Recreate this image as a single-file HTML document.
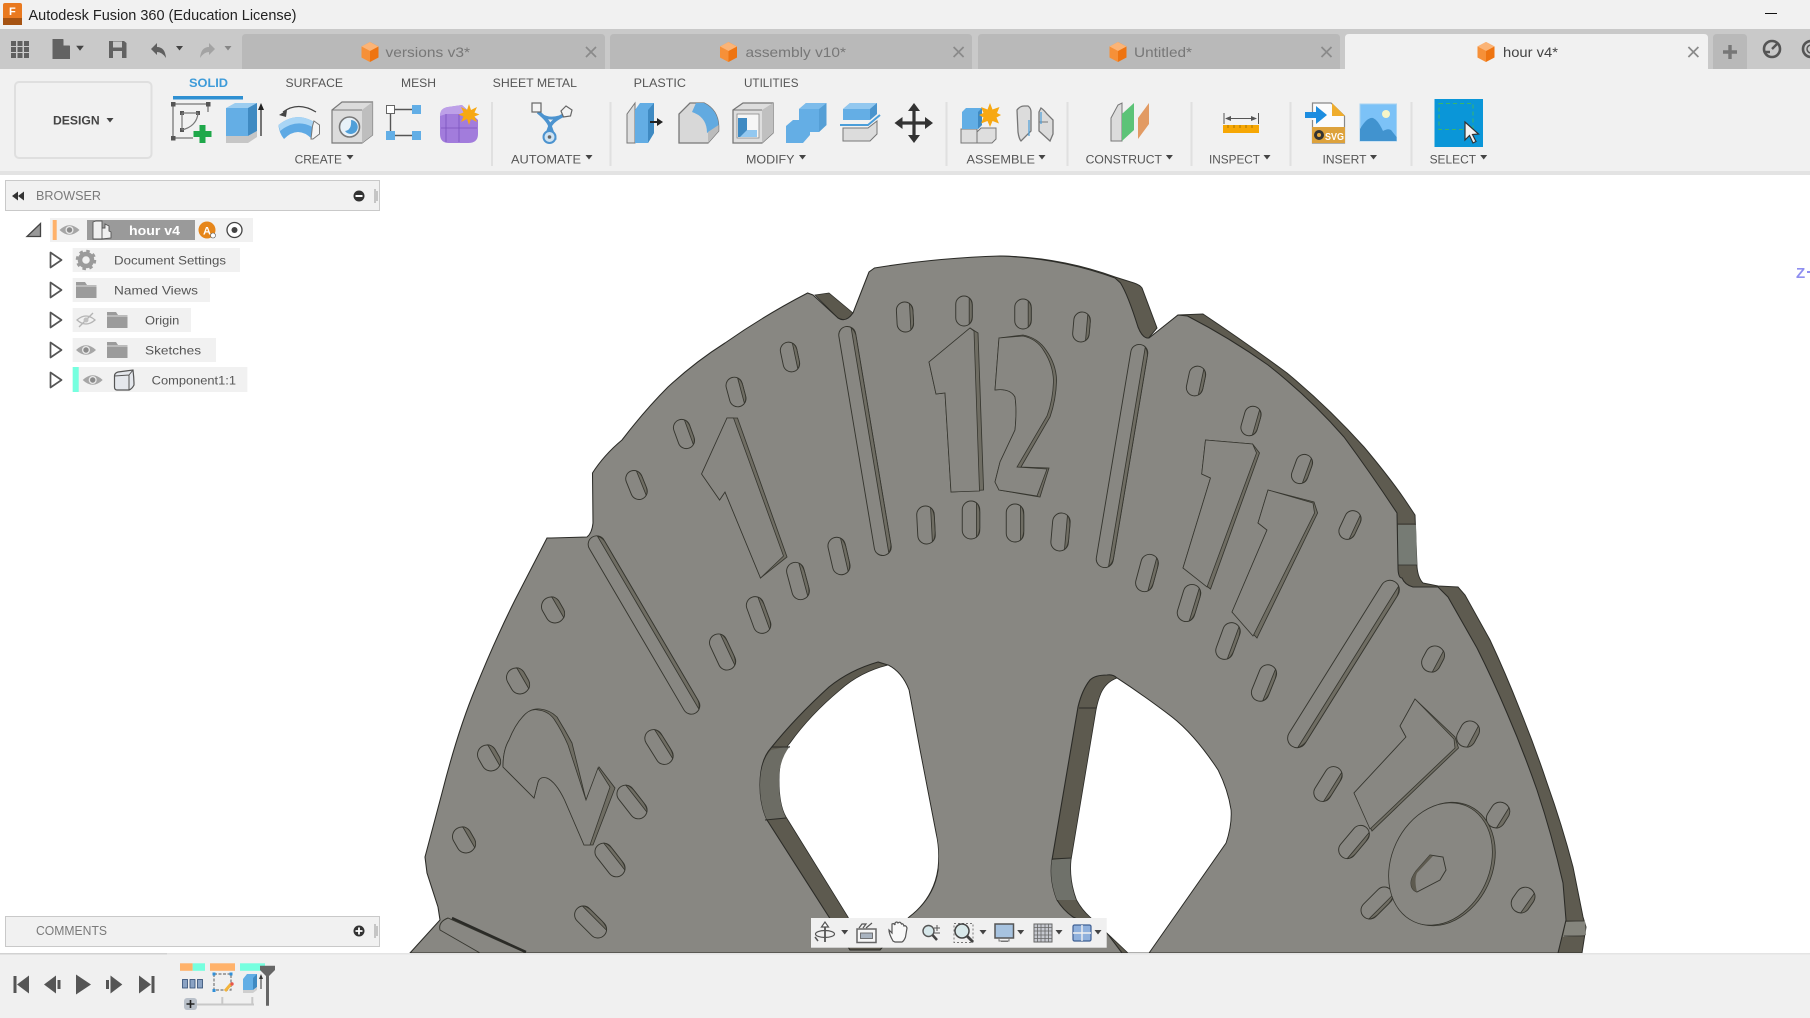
<!DOCTYPE html>
<html><head><meta charset="utf-8"><title>Autodesk Fusion 360</title>
<style>
html,body{margin:0;padding:0;background:#fff;width:1810px;height:1018px;overflow:hidden}
svg{position:absolute;left:0;top:0;display:block;font-family:"Liberation Sans",sans-serif;filter:blur(.35px)}
.lb{font-size:12px;fill:#555}
.tb{font-size:14px;fill:#777}
.tr{font-size:12px;fill:#555}
.ol{stroke:#36362f;stroke-width:.95;fill:#888782}
.wl{fill:#6f6d63;stroke:#36362f;stroke-width:.85}
</style></head><body>
<svg width="1810" height="1018" viewBox="0 0 1810 1018" xmlns="http://www.w3.org/2000/svg">
<defs>
<g id="a"><rect class="ol" x="-8.250" y="-15" width="16.500" height="30" rx="8.250"/><path class="wl" d="M5.200 -13V13Q7.800 11 8.250 6V-6Q7.800 -11 5.200 -13Z"/></g>
<g id="b"><rect class="ol" x="-8.750" y="-19" width="17.500" height="38" rx="8.750"/><path class="wl" d="M5.500 -17V17Q8.200 15 8.750 8V-8Q8.200 -15 5.500 -17Z"/></g>
<g id="c"><rect class="ol" x="-9.500" y="-13.500" width="19" height="27" rx="9.500"/><path class="wl" d="M5.500 -12V12Q8.800 10 9.500 5V-5Q8.800 -10 5.500 -12Z"/></g>
<g id="cube"><path d="M0 -10L8.500 -5.500V5.500L0 10Z" fill="#ee7411"/><path d="M0 -10L-8.500 -5.500V5.500L0 10Z" fill="#f7923c"/><path d="M0 -10L8.500 -5.500L0 -1L-8.500 -5.500Z" fill="#fbb477"/><path d="M0 -1V10L-8.500 5.500V-5.500Z" fill="#f58f35" opacity=".6"/></g>
<path id="car" d="M-3.500 -2H3.500L0 2.500Z" fill="#444"/>
<g id="x"><path d="M-5 -5L5 5M5 -5L-5 5" stroke="#8a8a8a" stroke-width="1.700" fill="none"/></g>
<g id="eye"><path d="M-10 0Q0 -9.500 10 0Q0 9.500 -10 0Z" fill="#a6a6a6"/><circle r="4" fill="#e8e8e8"/><circle r="2.700" fill="#8b8b8b"/></g>
<g id="fold"><path d="M0 0H9L11 3H20.500V16H0Z" fill="#9b9b9b"/><path d="M0 4H20.500" stroke="#f0f0f0" stroke-width=".8"/></g>
<path id="exp" d="M0 -7.500L11 0L0 7.500Z" fill="#fff" stroke="#555" stroke-width="1.700" stroke-linejoin="round"/>
</defs>

<!-- MODEL -->
<path d="M829 293L815 295L838 318L846 321L853 313Z" fill="#5b584d" stroke="#2f2f2a" stroke-width=".8"/>
<path d="M1000 256Q1060 257 1115 277L1134 283Q1140 285 1142 288L1157 328L1147 340L1178 315L1203 314Q1245 342 1287 373Q1328 407 1364 447Q1390 478 1405 500L1415 515L1417 567Q1418 578 1423 583L1438 586L1458 587L1465 595L1490 640Q1505 672 1520 710Q1535 747 1547 783Q1562 825 1573 867L1583 917L1586 927L1582 953H1000Z" fill="#5e5b50" stroke="#2f2f2a" stroke-width="1"/>
<path d="M1398 525L1416 525L1417 565L1398 565Z" fill="#767b74"/>
<path d="M1566 922L1585 921L1586 935L1563 937Z" fill="#85857d"/>
<path d="M1397 524H1415M1398 565H1417M1566 921H1584M1564 936H1585" stroke="#2f2f2a" stroke-width=".8"/>
<path d="M410 953L440 920L438 907L427 873L425 857L442 793Q458 730 476 687Q495 640 515 600L547 538L551 538L587 537Q592 533 593 523L592.500 473Q604 455 622 440Q645 410 668 387Q695 362 725 343Q765 315 807.600 293L813 295L838 318Q846 323 853 313L869 272L874.500 268Q935 258 1000 256Q1060 258 1115 278L1120.500 283Q1128 295 1138 327Q1142 337 1147 338L1149 338L1178 315L1187.500 316Q1230 338 1268 365Q1310 398 1344 437Q1372 475 1397 513L1398 567Q1398 578 1402 578Q1405 585 1413 587L1438 587L1448 597L1477 648Q1493 680 1507 713Q1523 750 1537 790Q1552 835 1563 883L1566 920L1558 953Z" fill="#888782" stroke="#2b2b27" stroke-width="1.050"/>

<!-- holes -->
<path d="M888 665L878 662Q850 670 829 687Q795 718 771 748Q760 760 760 785Q760 805 767 820L829 917L850 950L880 950L909 917Q934 898 938 870Q939 850 936 833L920 750L909 690Q902 672 888 665Z" fill="#5d5a4f" stroke="#2b2b27" stroke-width="1.100"/>
<path d="M888 665Q860 672 840 690Q810 715 790 743Q779 755 779 780Q779 805 786 817L848 917L860 945L880 945L909 917Q934 898 938 868Q940 850 936 833L920 750L909 690Q902 672 888 665Z" fill="#fff" stroke="#2b2b27" stroke-width=".8"/>
<path d="M771 750Q760 762 760 785Q760 805 767 820L786 818Q779 805 779 780Q779 760 790 746Z" fill="#6c6c64"/>
<path d="M772 747L790 747M765 820L786 818" stroke="#2b2b27" stroke-width=".9"/>
<path d="M1117 678Q1113 674 1107 675Q1095 675 1090 680Q1082 690 1078 707L1052 860Q1049 880 1057 900Q1063 910 1073 917L1107 933L1122 953L1149 953L1226 843Q1232 825 1231 810Q1228 790 1218 770Q1195 735 1172 717Q1143 695 1117 678Z" fill="#5d5a4f" stroke="#2b2b27" stroke-width="1.100"/>
<path d="M1052 860L1071 858Q1069 880 1076 900L1057 900Q1049 880 1052 860Z" fill="#6f716a"/>
<path d="M1117 678Q1106 682 1101 693Q1098 700 1096 710L1071 860Q1069 880 1076.500 900Q1082 910 1090 917L1128 953L1149 953L1226 843Q1232 825 1231 810Q1228 790 1218 770Q1195 735 1172 717Q1143 695 1117 678Z" fill="#fff" stroke="#2b2b27" stroke-width=".8"/>
<path d="M1079 708L1096 708M1052 859L1071 858" stroke="#2b2b27" stroke-width=".9"/>

<!-- long slots -->
<g transform="translate(865 441) rotate(-9.500)"><rect class="ol" x="-8.500" y="-116" width="17" height="232" rx="8.500"/><path class="wl" d="M5 -114V114Q8 111 8.500 106V-106Q8 -111 5 -114Z"/></g>
<g transform="translate(1122 456) rotate(9.500)"><rect class="ol" x="-8.500" y="-113" width="17" height="226" rx="8.500"/><path class="wl" d="M5 -111V111Q8 108 8.500 103V-103Q8 -108 5 -111Z"/></g>
<g transform="translate(644 625) rotate(-30.400)"><rect class="ol" x="-8.500" y="-102" width="17" height="204" rx="8.500"/><path class="wl" d="M4.800 -100V100Q8 97 8.500 92V-92Q8 -97 4.800 -100Z"/></g>
<g transform="translate(1343.500 664) rotate(32)"><rect class="ol" x="-9.500" y="-97" width="19" height="194" rx="9.500"/><path class="wl" d="M5.500 -95V95Q8.500 92 9.500 86V-86Q8.500 -92 5.500 -95Z"/></g>
<path d="M480 953L440 930Q438 922 448 918L526 953Z" class="ol"/>
<path d="M452 918L526 952" stroke="#2b2b27" stroke-width="2.400" fill="none"/>

<!-- small slots -->
<use href="#a" transform="translate(905 317) rotate(-3)"/>
<use href="#a" transform="translate(964 311)"/>
<use href="#a" transform="translate(1023 314)"/>
<use href="#a" transform="translate(1081.500 327) rotate(5)"/>
<use href="#a" transform="translate(790 357) rotate(-12)"/>
<use href="#a" transform="translate(736 392) rotate(-15)"/>
<use href="#a" transform="translate(684 434) rotate(-20)"/>
<use href="#a" transform="translate(636.500 485) rotate(-22)"/>
<use href="#c" transform="translate(553 610) rotate(-30)"/>
<use href="#c" transform="translate(518 681) rotate(-30)"/>
<use href="#c" transform="translate(489 758) rotate(-30)"/>
<use href="#c" transform="translate(464 840) rotate(-30)"/>
<use href="#a" transform="translate(1196 381) rotate(12)"/>
<use href="#a" transform="translate(1251 421) rotate(16)"/>
<use href="#a" transform="translate(1302 469) rotate(20)"/>
<use href="#a" transform="translate(1350 525) rotate(25)"/>
<use href="#c" transform="translate(1433 659) rotate(28)"/>
<use href="#c" transform="translate(1468 734) rotate(28)"/>
<use href="#c" transform="translate(1498 815) rotate(32)"/>
<use href="#c" transform="translate(1523 900) rotate(35)"/>
<use href="#b" transform="translate(926 525) rotate(-3)"/>
<use href="#b" transform="translate(971 520)"/>
<use href="#b" transform="translate(1015 523)"/>
<use href="#b" transform="translate(1060.500 532) rotate(5)"/>
<use href="#b" transform="translate(1147 573) rotate(15)"/>
<use href="#b" transform="translate(1189 603) rotate(17)"/>
<use href="#b" transform="translate(1228 641) rotate(20)"/>
<use href="#b" transform="translate(1264 683) rotate(22)"/>
<use href="#b" transform="translate(1328 784) rotate(32)"/>
<use href="#b" transform="translate(1354 842) rotate(40)"/>
<use href="#b" transform="translate(1377 903) rotate(45)"/>
<use href="#b" transform="translate(839 556) rotate(-13)"/>
<use href="#b" transform="translate(798 581) rotate(-15)"/>
<use href="#b" transform="translate(758.600 615) rotate(-20)"/>
<use href="#b" transform="translate(722.600 652) rotate(-25)"/>
<use href="#b" transform="translate(659 747) rotate(-32)"/>
<use href="#b" transform="translate(632 802) rotate(-38)"/>
<use href="#b" transform="translate(610 860) rotate(-38)"/>
<use href="#b" transform="translate(590.600 922) rotate(-45)"/>

<!-- digits -->
<path class="wl" d="M727 418L737.500 418L787 557L760.500 578L725 492L719.600 500L701.600 474Z"/>
<path d="M727 418L733.500 418L783.500 556L760.500 578L725 492L719.600 500L701.600 474Z" fill="#888782" stroke="#36362f" stroke-width=".8"/>
<path class="wl" d="M970 328L978 333L983.600 490L951 492L945 393L936 394L929 362Z"/>
<path d="M970 328L974 331L979.500 491L951 492L945 393L936 394L929 362Z" fill="#888782" stroke="#36362f" stroke-width=".8"/>
<path class="wl" d="M999 338L1023 335Q1038 338 1046 350Q1056 364 1056.600 380Q1056 400 1050 417L1021 467L1049 468L1040 497L999 490L995 482L1000 462L1015 430Q1017 410 1015 397Q1010 388 995 390Z"/>
<path d="M999 338L1023 336Q1037 339 1044 351Q1053 365 1053.500 381Q1053 400 1047 416L1017 467L1047 469L1037 496L999 490L995 482L1000 462L1015 430Q1017 410 1015 397Q1010 388 995 390Z" fill="#888782" stroke="#36362f" stroke-width=".8"/>
<path class="wl" d="M1205.500 440L1252.600 444L1259.500 453L1210.500 589L1183 568L1210.500 478L1201.700 474Z"/>
<path d="M1205.500 440L1252.600 444L1256.500 453L1207 587L1183 568L1210.500 478L1201.700 474Z" fill="#888782" stroke="#36362f" stroke-width=".8"/>
<path class="wl" d="M1268 490L1314 502L1317.600 513L1257 638L1232 612L1267 530L1258 523Z"/>
<path d="M1268 490L1313 503L1314.500 513L1253 636L1232 612L1267 530L1258 523Z" fill="#888782" stroke="#36362f" stroke-width=".8"/>
<path class="wl" d="M1415 699L1455 737L1458.500 748L1372 831L1354 793L1406 737L1400 726Z"/>
<path d="M1415 699L1454 739L1455 748L1370 829L1354 793L1406 737L1400 726Z" fill="#888782" stroke="#36362f" stroke-width=".8"/>
<path class="wl" d="M503 767Q503 750 509 740Q515 725 522.500 717Q530 708 540 709Q550 710 557 717Q565 730 572 743L586 800L599 767L615 788L593 845L584 845L564.600 800Q556 782 547 778Q540 776 538 782L534 798Z"/>
<path d="M503 767Q503 750 509 740Q515 725 522.500 717Q530 708 538 710Q548 711 554 719Q562 731 568 745L586 800L598 768L610 787L590 845L584 845L564.600 800Q556 782 547 778Q540 776 538 782L534 798Z" fill="#888782" stroke="#36362f" stroke-width=".8"/>
<ellipse cx="1442.500" cy="864" rx="50" ry="64" transform="rotate(25 1442.500 864)" class="wl"/>
<ellipse cx="1440.500" cy="864" rx="49" ry="63.500" transform="rotate(25 1440.500 864)" fill="#888782" stroke="#36362f" stroke-width=".8"/>
<path d="M1411 883Q1411 878 1416 871L1430 855L1443 857L1446 870L1440 880L1417 892Q1411 890 1411 883Z" class="ol"/>
<path d="M1411 883Q1411 878 1416 871L1430 855L1433 856L1417 873Q1414 880 1417 892Q1411 890 1411 883Z" fill="#5d5a4f"/>

<!-- Z axis -->
<text x="1796" y="278" font-size="15" font-weight="bold" fill="#8f8ff0">Z</text>
<path d="M1807 272H1810" stroke="#8f8ff0" stroke-width="2"/>

<!-- TITLE BAR -->
<rect width="1810" height="29" fill="#f1f1f1"/>
<path d="M3 5Q3 3 5 3H20Q22 3 22 5V25H3Z" fill="#e9791f"/>
<rect x="3" y="18" width="19" height="7" fill="#a65312"/>
<text x="9" y="15" font-size="11" font-weight="bold" fill="#fff">F</text>
<text x="28.500" y="20" font-size="14.500" fill="#222" textLength="268" lengthAdjust="spacingAndGlyphs">Autodesk Fusion 360 (Education License)</text>
<rect x="1765" y="13" width="12" height="1" fill="#111"/>

<!-- TAB STRIP -->
<rect y="29" width="1810" height="40" fill="#c9c9c9"/>
<path d="M242 69V38Q242 34 246 34H601Q605 34 605 38V69Z" fill="#b9b9b9"/>
<path d="M610 69V38Q610 34 614 34H968Q972 34 972 38V69Z" fill="#b9b9b9"/>
<path d="M978 69V38Q978 34 982 34H1336Q1340 34 1340 38V69Z" fill="#b9b9b9"/>
<path d="M1345 69V38Q1345 34 1349 34H1704Q1708 34 1708 38V69Z" fill="#f1f1f1"/>
<path d="M1713 69V38Q1713 34 1717 34H1743Q1747 34 1747 38V69Z" fill="#b9b9b9"/>
<use href="#cube" transform="translate(370 52)"/><use href="#cube" transform="translate(728.500 52)"/><use href="#cube" transform="translate(1118 52)"/><use href="#cube" transform="translate(1486 52)"/>
<text class="tb" x="385.500" y="57" textLength="84.500" lengthAdjust="spacingAndGlyphs">versions v3*</text>
<text class="tb" x="745.500" y="57" textLength="100.500" lengthAdjust="spacingAndGlyphs">assembly v10*</text>
<text class="tb" x="1134" y="57" textLength="58" lengthAdjust="spacingAndGlyphs">Untitled*</text>
<text class="tb" x="1503" y="57" textLength="55" lengthAdjust="spacingAndGlyphs" style="fill:#444">hour v4*</text>
<use href="#x" transform="translate(591 52)"/><use href="#x" transform="translate(958.600 52)"/><use href="#x" transform="translate(1326.500 52)"/><use href="#x" transform="translate(1693.400 52)"/>
<path d="M1730 45V59M1723 52H1737" stroke="#777" stroke-width="3.400"/>
<circle cx="1772" cy="49" r="8" fill="none" stroke="#555" stroke-width="2.600"/><path d="M1772 49L1778 43M1764 52H1770" stroke="#555" stroke-width="2.400"/>
<circle cx="1811" cy="49" r="8" fill="none" stroke="#555" stroke-width="2.600"/><circle cx="1811" cy="49" r="4" fill="none" stroke="#555" stroke-width="1.500"/>
<!-- left tab bar icons -->
<g fill="#5f5f5f"><rect x="11" y="41" width="5" height="5"/><rect x="17.500" y="41" width="5" height="5"/><rect x="24" y="41" width="5" height="5"/><rect x="11" y="47" width="5" height="5"/><rect x="17.500" y="47" width="5" height="5"/><rect x="24" y="47" width="5" height="5"/><rect x="11" y="53" width="5" height="5"/><rect x="17.500" y="53" width="5" height="5"/><rect x="24" y="53" width="5" height="5"/></g>
<path d="M52.500 39H63L70 46V59H52.500Z" fill="#626262"/><path d="M63.500 39V45.500H70Z" fill="#c9c9c9"/>
<use href="#car" transform="translate(80 48) scale(1.100)"/>
<path d="M109 41H124L126.500 43V58H109Z" fill="#626262"/><rect x="113" y="41.500" width="9" height="6" fill="#c9c9c9"/><rect x="113" y="51" width="9" height="7" fill="#c9c9c9"/>
<path d="M151 49L157 43V47Q165 47 166 58Q162 52 157 52V55Z" fill="#5f5f5f"/>
<use href="#car" transform="translate(179.500 48)"/>
<path d="M215 49L209 43V47Q201 47 200 58Q204 52 209 52V55Z" fill="#a3a3a3"/>
<use href="#car" transform="translate(228 48)" style="opacity:.5"/>

<!-- TOOLBAR -->
<rect y="69" width="1810" height="102" fill="#f1f1f1"/>
<rect y="171" width="1810" height="4" fill="#e3e3e3"/>
<rect x="15" y="82" width="136.500" height="76" rx="4" fill="#f1f1f1" stroke="#dfdfdf" stroke-width="2"/>
<text x="53" y="124.500" font-size="12" font-weight="bold" fill="#444" textLength="46.600" lengthAdjust="spacingAndGlyphs">DESIGN</text>
<use href="#car" transform="translate(110 120)"/>
<text x="189" y="87" font-size="12" font-weight="bold" fill="#3d9bd9" textLength="39" lengthAdjust="spacingAndGlyphs">SOLID</text>
<rect x="173" y="96" width="70" height="3.500" fill="#2f90d2"/>
<text class="lb" x="285.500" y="87" textLength="57.500" lengthAdjust="spacingAndGlyphs">SURFACE</text>
<text class="lb" x="401" y="87" textLength="35" lengthAdjust="spacingAndGlyphs">MESH</text>
<text class="lb" x="492.700" y="87" textLength="84.300" lengthAdjust="spacingAndGlyphs">SHEET METAL</text>
<text class="lb" x="633.600" y="87" textLength="52.400" lengthAdjust="spacingAndGlyphs">PLASTIC</text>
<text class="lb" x="744" y="87" textLength="54.500" lengthAdjust="spacingAndGlyphs">UTILITIES</text>
<text class="lb" x="294.600" y="163.500" textLength="47.400" lengthAdjust="spacingAndGlyphs">CREATE</text><use href="#car" transform="translate(350 157)"/>
<text class="lb" x="511" y="163.500" textLength="70" lengthAdjust="spacingAndGlyphs">AUTOMATE</text><use href="#car" transform="translate(589 157)"/>
<text class="lb" x="746" y="163.500" textLength="48.500" lengthAdjust="spacingAndGlyphs">MODIFY</text><use href="#car" transform="translate(802.500 157)"/>
<text class="lb" x="966.500" y="163.500" textLength="68.500" lengthAdjust="spacingAndGlyphs">ASSEMBLE</text><use href="#car" transform="translate(1042 157)"/>
<text class="lb" x="1085.600" y="163.500" textLength="76.400" lengthAdjust="spacingAndGlyphs">CONSTRUCT</text><use href="#car" transform="translate(1169.400 157)"/>
<text class="lb" x="1209" y="163.500" textLength="51" lengthAdjust="spacingAndGlyphs">INSPECT</text><use href="#car" transform="translate(1267 157)"/>
<text class="lb" x="1322.500" y="163.500" textLength="44" lengthAdjust="spacingAndGlyphs">INSERT</text><use href="#car" transform="translate(1373.500 157)"/>
<text class="lb" x="1429.600" y="163.500" textLength="46.400" lengthAdjust="spacingAndGlyphs">SELECT</text><use href="#car" transform="translate(1483.700 157)"/>
<g fill="#e0e0e0"><rect x="491" y="102" width="2" height="64"/><rect x="609.500" y="102" width="2" height="64"/><rect x="945.500" y="102" width="2" height="64"/><rect x="1066.500" y="102" width="2" height="64"/><rect x="1190.500" y="102" width="2" height="64"/><rect x="1289.500" y="102" width="2" height="64"/><rect x="1410.500" y="102" width="2" height="64"/></g>

<!-- sketch -->
<path d="M173 104H208V112M173 104V138H193" fill="none" stroke="#777" stroke-width="1.300"/>
<g fill="#555"><rect x="171" y="102" width="4.500" height="4.500"/><rect x="206" y="102" width="4.500" height="4.500"/><rect x="171" y="136" width="4.500" height="4.500"/><rect x="180" y="111" width="4" height="4"/><rect x="196" y="111" width="4" height="4"/><rect x="180" y="128" width="4" height="4"/></g>
<path d="M182 113V130M182 113H198M198 113Q197 126 182 130" fill="none" stroke="#777" stroke-width="1.200"/>
<path d="M199.500 125H205.500V131H211.500V137H205.500V143H199.500V137H193.500V131H199.500Z" fill="#1fa84a"/>
<!-- extrude -->
<path d="M226 108L235 103H257V132L248 136V108Z" fill="#9ccdf0"/>
<rect x="226" y="108" width="22" height="28" fill="#64aee5"/>
<path d="M248 108L257 103V131L248 136Z" fill="#3f8ac2"/>
<path d="M226 136H248L257 131V137L248 143H226Z" fill="#c6c6c6"/>
<path d="M261 136V108" stroke="#222" stroke-width="1.200"/><path d="M261 103L258 110H264Z" fill="#222"/>
<!-- revolve -->
<path d="M283 112Q298 101 316 112" fill="none" stroke="#444" stroke-width="1.200"/><path d="M279 115L287 110L286 117Z" fill="#444"/>
<path d="M278.500 125Q296 111 314 122L312 139Q298 125 284 139Q279 133 278.500 125Z" fill="#5ea9e4"/>
<path d="M278.500 125Q296 111 314 122L312.500 127Q296 118 280 131Z" fill="#a9d5f5"/>
<path d="M314 121L319.500 125V134L313 139L311 139L312.500 126Z" fill="#f4f4f4" stroke="#777" stroke-width="1"/>
<!-- hole -->
<path d="M332 110L342 102H372.500V135L362 143H332Z" fill="#dcdcdc" stroke="#7a7a7a" stroke-width="1.200"/>
<path d="M362 110L372.500 102V135L362 143Z" fill="#bebebe"/><path d="M332 110H362" stroke="#7a7a7a"/>
<circle cx="349.500" cy="127" r="10" fill="#e8f1f8" stroke="#777" stroke-width="1.600"/><path d="M351 120A7 7 0 1 1 345 131Q352 130 351 120Z" fill="#4f9fd9"/>
<!-- rect pattern -->
<path d="M395 109.500H412M390.500 114V131M395 135.500H412" stroke="#555" stroke-width="1.400"/>
<rect x="386.500" y="105.500" width="8" height="8" fill="#fff" stroke="#666"/>
<rect x="412" y="105" width="9" height="9" fill="#62aee6"/><rect x="386" y="131" width="9" height="9" fill="#62aee6"/><rect x="412" y="131" width="9" height="9" fill="#62aee6"/>
<!-- purple -->
<path d="M440 116Q440 108 448 107L462 105L478 120V134Q478 143 468 143H449Q440 143 440 134Z" fill="#a27cdc"/>
<path d="M440 116Q440 108 448 107L462 105L470 114H446Z" fill="#bda0e8"/>
<path d="M446 114V142M441 128H477M459 114V142" stroke="#7c53bd" stroke-width=".8"/>
<path d="M469 104L471 110L477 107L474.500 112.500L479.500 114.500L474.500 116.500L477 122L471 119L469 125L467 119L461 122L463.500 116.500L458.500 114.500L463.500 112.500L461 107L467 110Z" fill="#f7a812"/>
<!-- automate -->
<path d="M538 112Q548 120 550 126Q553 120 564 115M550 126L545 140M550 126L555 140" fill="none" stroke="#4c93cf" stroke-width="3.600"/>
<path d="M541 115Q549 120 559 117" fill="none" stroke="#4c93cf" stroke-width="3"/>
<rect x="532" y="103" width="9" height="9" fill="#f4f4f4" stroke="#666" stroke-width="1.200"/>
<path d="M566 106L572 110L570.500 116L563.500 117L561 111Z" fill="#f4f4f4" stroke="#666" stroke-width="1.200"/>
<circle cx="549.500" cy="137" r="6" fill="#cfe3f2" stroke="#4c93cf" stroke-width="2"/><circle cx="549.500" cy="137" r="1.800" fill="#666"/>
<!-- press pull -->
<path d="M627 143V114L635 103V143Z" fill="#dedede" stroke="#777"/>
<path d="M635 110L640 103H654V133L648 143H635Z" fill="#63ade4"/>
<path d="M648 110L654 103V133L648 143Z" fill="#3f8ac2"/>
<path d="M650 122H658" stroke="#222" stroke-width="2"/><path d="M657 118L663 122L657 126Z" fill="#222"/>
<!-- fillet -->
<path d="M679 143V114L690 103H704Q718 110 718.600 126V131L708 143Z" fill="#d8d8d8" stroke="#777" stroke-width="1.300"/>
<path d="M696 103H704Q718 110 718.600 126L707 133Q707 117 692 112Z" fill="#62aae0"/>
<path d="M708 143V132L718.600 125V131Z" fill="#bcbcbc"/>
<!-- shell box -->
<path d="M733 110L743 103H773V133L762 143H733Z" fill="#dedede" stroke="#777" stroke-width="1.300"/>
<path d="M762 110L773 103V133L762 143Z" fill="#c0c0c0"/><path d="M733 110H762" stroke="#777"/>
<rect x="737" y="114" width="22" height="24" fill="#f6f6f6" stroke="#888" stroke-width=".800"/>
<path d="M738 118H747V130H757V137H738Z" fill="#3f8ac2"/><path d="M747 130H757V137H740Z" fill="#93c8f0"/>
<!-- combine -->
<path d="M786 126L793 120H799V109L806 103H826.500V125L819 132H810V135L803 143H786Z" fill="#64aee5"/>
<path d="M819 109L826.500 103V125L819 132Z" fill="#559fd6"/>
<path d="M799 109L806 103H826.500L819 109Z" fill="#7dbceb"/>
<!-- split -->
<path d="M843 109L850 103H877V114L870 120H843Z" fill="#64aee5"/><path d="M843 109L850 103H877L870 109Z" fill="#93c8ef"/><path d="M870 109L877 103V114L870 120Z" fill="#4a94cd"/>
<path d="M840 125H868L880 115" fill="none" stroke="#4b9ed9" stroke-width="2"/>
<path d="M843 128H868L877 121V134L870 141H843Z" fill="#dcdcdc" stroke="#777"/>
<!-- move -->
<path d="M914 106V140M897 123H931" stroke="#333" stroke-width="3.200"/>
<path d="M914 103L920 111H908ZM914 143L920 135H908ZM894.500 123L902.500 117V129ZM933 123L925 117V129Z" fill="#333"/>
<!-- assemble -->
<path d="M961 129H977V143H961ZM977 132L981 128H996V139L992 143H977Z" fill="#dedede" stroke="#777"/>
<path d="M962 112L966 108H982V125L978 129H962Z" fill="#62aee5"/><path d="M978 112L982 108V125L978 129Z" fill="#3f8ac2"/>
<path d="M990 103L992.500 109.500L999.500 107L997 113L1001 115L996.500 117.500L999 123.500L992.500 121L990 127L987.500 121L981 123.500L983.500 117.500L979 115L983.500 113L981 107L987.500 109.500Z" fill="#f7a812"/>
<!-- joint -->
<path d="M1017 110Q1020 106 1024 106H1028Q1031 108 1031 112V131L1021 141Q1019 139 1018 132Z" fill="#dcdcdc" stroke="#777" stroke-width="1.300"/>
<path d="M1041 108Q1044 110 1047 114L1053 120V134L1050 141L1039 131V112Z" fill="#dcdcdc" stroke="#777" stroke-width="1.300"/>
<path d="M1039 122H1048" stroke="#777"/>
<path d="M1029 120V136M1041 112V124" stroke="#4b9ed9" stroke-width="1.200"/>
<!-- construct -->
<path d="M1111 118L1118 105L1122 103V141H1111Z" fill="#dcdcdc" stroke="#777"/>
<path d="M1122 141V114L1134 103V130Z" fill="#5cc377"/>
<path d="M1138 139V118L1149 103V124Z" fill="#e29b64"/>
<!-- inspect -->
<path d="M1224 113V124M1258.500 113V124M1226 118.500H1256" stroke="#555" stroke-width="1"/>
<path d="M1225 118.500L1231 116V121ZM1257 118.500L1251 116V121Z" fill="#555"/>
<rect x="1223" y="125" width="36" height="8" fill="#f6a704"/>
<path d="M1228 125V128M1234 125V128M1240 125V128M1246 125V128M1252 125V128" stroke="#9a6a00" stroke-width=".800"/>
<!-- insert svg -->
<path d="M1312.500 112V103H1331L1344.500 116V143H1312.500V120" fill="#fbfbfb" stroke="#888" stroke-width="1.200"/>
<path d="M1332 103L1345 116H1332Z" fill="#efad2d"/>
<path d="M1305 112H1316V106L1327 115L1316 124V118H1305Z" fill="#1c8de0"/>
<rect x="1312" y="127" width="33" height="16" fill="#dda23c"/>
<circle cx="1319" cy="135" r="5" fill="#333"/><circle cx="1319" cy="135" r="2" fill="#e5a93f"/>
<text x="1325" y="140" font-size="10" font-weight="bold" fill="#fff" textLength="19" lengthAdjust="spacingAndGlyphs">SVG</text>
<!-- image -->
<rect x="1360" y="104" width="36.500" height="37" fill="#7cc2f7" stroke="#a6d3f2"/>
<path d="M1360 141V129Q1367 117 1373 118Q1378 120 1383 131Q1388 128 1391 130L1396.500 137V141Z" fill="#4193cf"/>
<circle cx="1386" cy="114" r="4" fill="#f7f6c8"/>
<!-- select -->
<rect x="1434.500" y="99" width="48.500" height="48" fill="#0a96d8"/>
<rect x="1439" y="103.500" width="34" height="26" fill="none" stroke="#38b56c" stroke-width="1" stroke-dasharray="4 3"/>
<path d="M1465 122V140L1469.500 135.500L1473 143L1476 141.500L1472.500 134.500L1478.500 134Z" fill="#f4f4f4" stroke="#333" stroke-width="1.200"/>

<!-- BROWSER -->
<rect x="5.500" y="180.500" width="374" height="30" fill="#f1f1f1" stroke="#c9c9c9"/>
<path d="M18 196L24 191.500V200.500ZM12 196L18 191.500V200.500Z" fill="#333"/>
<text x="36" y="200" font-size="12.500" fill="#7a7a7a" textLength="65" lengthAdjust="spacingAndGlyphs">BROWSER</text>
<circle cx="359" cy="196" r="5.500" fill="#333"/><rect x="355.500" y="195" width="7" height="2" fill="#fff"/>
<path d="M375 189V203M377 191V201" stroke="#999" stroke-width="1"/>

<path d="M27 236.500L40.500 223.500V236.500Z" fill="#999" stroke="#444" stroke-width="1.300"/>
<rect x="50" y="218" width="203" height="24" fill="#f1f1f1"/>
<rect x="52.700" y="220" width="4" height="20" fill="#ffb26b"/>
<use href="#eye" transform="translate(69.500 230)"/>
<rect x="87" y="220" width="108" height="20" fill="#9a9a9a"/>
<path d="M93 222L96 221H102V239H93ZM102 228H105V224L109 226V231L111 232V238L102 239Z" fill="#efefef" stroke="#555" stroke-width=".900"/>
<text x="129" y="235" font-size="13" font-weight="bold" fill="#fff" textLength="51" lengthAdjust="spacingAndGlyphs">hour v4</text>
<circle cx="207" cy="230" r="8.500" fill="#e6861a"/><text x="203" y="234.500" font-size="11" font-weight="bold" fill="#fff">A</text><circle cx="213" cy="235.500" r="2.500" fill="#fff" stroke="#555" stroke-width=".600"/>
<circle cx="234.500" cy="230" r="7.500" fill="#fff" stroke="#444" stroke-width="1.300"/><circle cx="234.500" cy="230" r="3" fill="#444"/>

<use href="#exp" transform="translate(50.500 260)"/>
<rect x="72.700" y="248" width="167.300" height="24" fill="#f1f1f1"/>
<circle cx="86" cy="260" r="6" fill="none" stroke="#9b9b9b" stroke-width="4.500"/><circle cx="86" cy="260" r="9" fill="none" stroke="#9b9b9b" stroke-width="2.500" stroke-dasharray="3.500 3.570"/>
<text class="tr" x="114" y="264.500" textLength="112" lengthAdjust="spacingAndGlyphs">Document Settings</text>

<use href="#exp" transform="translate(50.500 290)"/>
<rect x="72.700" y="278" width="137.300" height="24" fill="#f1f1f1"/>
<use href="#fold" transform="translate(76 282)"/>
<text class="tr" x="114" y="294.500" textLength="84" lengthAdjust="spacingAndGlyphs">Named Views</text>

<use href="#exp" transform="translate(50.500 320)"/>
<rect x="72.700" y="308" width="118.300" height="24" fill="#f1f1f1"/>
<path d="M77 320Q86 312 95 320Q86 328 77 320Z" fill="none" stroke="#b4b4b4" stroke-width="1.300"/><path d="M79 327L93 313" stroke="#b4b4b4" stroke-width="1.300"/><circle cx="86" cy="320" r="2.500" fill="#c0c0c0"/>
<use href="#fold" transform="translate(107 312)"/>
<text class="tr" x="145" y="324.500" textLength="34.300" lengthAdjust="spacingAndGlyphs">Origin</text>

<use href="#exp" transform="translate(50.500 350)"/>
<rect x="72.700" y="338" width="143.300" height="24" fill="#f1f1f1"/>
<use href="#eye" transform="translate(86 350)"/>
<use href="#fold" transform="translate(107 342)"/>
<text class="tr" x="145" y="354.500" textLength="56" lengthAdjust="spacingAndGlyphs">Sketches</text>

<use href="#exp" transform="translate(50.500 380)"/>
<rect x="72.700" y="367" width="174.600" height="25" fill="#f1f1f1"/>
<rect x="72.700" y="367" width="6" height="25" fill="#76ffdf"/>
<use href="#eye" transform="translate(92.700 380)"/>
<path d="M114.500 376Q114.500 373 118 372L133 370Q134 378 134 385Q132 389 129 390H117Q114.500 390 114.500 387Z" fill="#e4e7ec" stroke="#555" stroke-width="1.200"/><path d="M114.500 376L129 375V390M129 375L133 370" fill="none" stroke="#555" stroke-width="1"/>
<text class="tr" x="151.700" y="384.500" textLength="84.300" lengthAdjust="spacingAndGlyphs">Component1:1</text>

<!-- COMMENTS -->
<rect x="5.500" y="916.500" width="374" height="30" fill="#f1f1f1" stroke="#c9c9c9"/>
<text x="36" y="935" font-size="12.500" fill="#7a7a7a" textLength="71" lengthAdjust="spacingAndGlyphs">COMMENTS</text>
<circle cx="359" cy="931" r="5.500" fill="#333"/><path d="M355.500 931H362.500M359 927.500V934.500" stroke="#fff" stroke-width="1.800"/>
<path d="M375 924V938M377 926V936" stroke="#999" stroke-width="1"/>

<!-- BOTTOM BAR -->
<rect y="953" width="1810" height="65" fill="#f0f0f0"/>
<rect y="953" width="1810" height="1.500" fill="#e4e4e4"/>
<rect y="953" width="167" height="1.500" fill="#d2d2d2"/>
<g fill="#555">
<rect x="13.500" y="976" width="3" height="17"/><path d="M29 975.500V993.500L17 984.500Z"/>
<path d="M44 984.500L56 975.500V993.500Z"/><rect x="57.500" y="980" width="3" height="9"/>
<path d="M76 974.500L91 984.500L76 994.500Z"/>
<rect x="106" y="980" width="3" height="9"/><path d="M110.500 975.500V993.500L122.300 984.500Z"/>
<path d="M139 975.500V993.500L151 984.500Z"/><rect x="151.500" y="976" width="3" height="17"/>
</g>
<rect x="180" y="963.300" width="12.700" height="7.500" fill="#ffb26b"/><rect x="192.700" y="963.300" width="12.300" height="7.500" fill="#76ffdf"/>
<rect x="210" y="963.300" width="25" height="7.500" fill="#ffb26b"/><rect x="240" y="963.300" width="25" height="7.500" fill="#76ffdf"/>
<g fill="#8ba3c4" stroke="#2f4a72" stroke-width=".800"><rect x="182.500" y="979.500" width="5" height="8.500"/><rect x="190" y="979.500" width="5" height="8.500"/><rect x="197.500" y="979.500" width="5" height="8.500"/></g>
<rect x="214" y="974" width="17" height="16" fill="none" stroke="#777" stroke-width="1.200" stroke-dasharray="3 1.500"/>
<rect x="212.500" y="972.500" width="3" height="3" fill="#2f8fd8"/><rect x="229.500" y="972.500" width="3" height="3" fill="#2f8fd8"/><rect x="212.500" y="989" width="3" height="3" fill="#2f8fd8"/>
<path d="M225 991L231 984" stroke="#f2b33c" stroke-width="3"/><circle cx="232" cy="984" r="1.700" fill="#e8564a"/>
<path d="M243 979L247 974H257V987L253 990H243Z" fill="#62aee5"/><path d="M253 978L257 974V987L253 990Z" fill="#3f8ac2"/><path d="M243 990H253L257 987V990L253 993H243Z" fill="#cfcfcf"/>
<path d="M261 989V977" stroke="#333"/><path d="M261 974L259 979H263Z" fill="#333"/>
<path d="M196 1004.500H254M222.300 997V1004.500M252.300 997V1004.500" stroke="#c8c8c8" stroke-width="2" fill="none"/>
<rect x="184" y="998" width="13" height="12" rx="3" fill="#b9c0c9"/><path d="M186.500 1004H194.500M190.500 1000V1008" stroke="#222" stroke-width="1.600"/>
<path d="M260 965.700H275V970L269 976V1005.700H266V976L260 970Z" fill="#666"/>

<!-- NAV BAR -->
<rect x="811" y="918" width="295.700" height="29.700" fill="#f0f0f0"/>
<g fill="none" stroke="#555" stroke-width="1.200">
<path d="M825 923V942" stroke-width="1.800"/><path d="M825 922L821.500 927H828.500Z" fill="#fff"/>
<ellipse cx="825" cy="934" rx="9.500" ry="3.500"/><path d="M815 937L818 941" stroke-width="1.500"/>
<rect x="857" y="929" width="19" height="13.500" stroke="#666" stroke-width="1.500" fill="#f6f6f6"/><rect x="860.500" y="933" width="12" height="5.500" fill="#aab4c0" stroke="#666" stroke-width=".900"/><path d="M859 928L862 924H866L863 928M866 928L872 923"/>
<path d="M893 941Q889 934 889 930L892 933V924Q894 923 895 925V923Q897 921 898 923V923Q900 921 901.500 924Q903 923 904 926Q906 925 907 928L905.500 937Q904 941 902 942H895Z" fill="#f8f8f8"/>
</g>
<circle cx="928.500" cy="931" r="5.500" fill="#d6e7ea" stroke="#555" stroke-width="1.400"/><path d="M932.500 935L937 940" stroke="#444" stroke-width="2.500"/><path d="M934 928H940M937 925V931M934 933H940" stroke="#555" stroke-width="1"/>
<rect x="954" y="923.500" width="19" height="19" fill="none" stroke="#777" stroke-dasharray="2 2"/><circle cx="962" cy="931" r="7" fill="#d8e8ea" stroke="#444" stroke-width="1.500"/><path d="M967 936L973 942" stroke="#444" stroke-width="2.800"/>
<rect x="995" y="924" width="18.500" height="14" fill="#a7c3e0" stroke="#555" stroke-width="1.500"/><path d="M999 938V941H1009V938M1001 941.500H1008" stroke="#777" fill="none"/>
<rect x="1034" y="924" width="18" height="18" fill="#c7c9d0" stroke="#666"/>
<path d="M1037.500 924V942M1041 924V942M1045 924V942M1048.500 924V942M1034 927.500H1052M1034 931H1052M1034 935H1052M1034 938.500H1052" stroke="#666" stroke-width=".800"/>
<rect x="1073" y="925" width="18" height="16" rx="1.500" fill="#8fb0dc" stroke="#3f5f93" stroke-width="1.200"/><path d="M1073 933H1091M1082 925V941" stroke="#f0f0f0" stroke-width="1.400"/>
<use href="#car" transform="translate(844.700 932)"/><use href="#car" transform="translate(983 932)"/><use href="#car" transform="translate(1020.700 932)"/><use href="#car" transform="translate(1059 932)"/><use href="#car" transform="translate(1098 932)"/>
</svg>
</body></html>
